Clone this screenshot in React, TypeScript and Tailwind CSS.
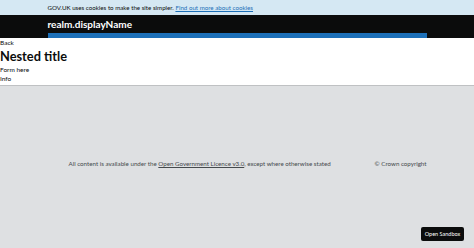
export default function App() {
  return (
    <div
      className="flex min-h-[248px] flex-col bg-white text-[#0b0c0c]"
      style={{ fontFamily: 'Lato, Arial, sans-serif' }}
    >
      <div className="h-[15px] bg-[#d5e8f3]">
        <div className="mx-auto flex h-full w-[379px] items-center text-[6.2px] text-[#0b0c0c]">
          GOV.UK uses cookies to make the site simpler.&nbsp;
          <a href="#" className="text-[#1d70b8] underline">
            Find out more about cookies
          </a>
        </div>
      </div>

      <header className="bg-[#0b0c0c]">
        <div className="mx-auto w-[379px]">
          <div className="flex h-[18px] items-center text-[10px] font-bold text-white">
            realm.displayName
          </div>
          <div className="h-[5px] bg-[#1d70b8]" />
        </div>
      </header>

      <main className="pb-[2px] text-[6.5px] leading-[9px]">
        <div>Back</div>
        <h1 className="text-[12.8px] font-bold leading-[18px]">Nested title</h1>
        <div>Form here</div>
        <div>Info</div>
      </main>

      <footer className="relative flex flex-1 items-center border-t border-[#bfc1c3] bg-[#dee0e2] text-[6.2px] text-[#454a4d]">
        <div className="mx-auto flex w-[379px] items-center justify-between pb-[6px] pl-[21px]">
          <span>
            All content is available under the{" "}
            <a href="#" className="underline">
              Open Government Licence v3.0
            </a>
            , except where otherwise stated
          </span>
          <span>© Crown copyright</span>
        </div>
        <button className="absolute bottom-[7px] right-[10px] flex h-[14px] w-[43px] items-center justify-center rounded-[2px] bg-[#0b0c0c] text-[5.5px] text-white">
          Open Sandbox
        </button>
      </footer>
    </div>
  );
}
